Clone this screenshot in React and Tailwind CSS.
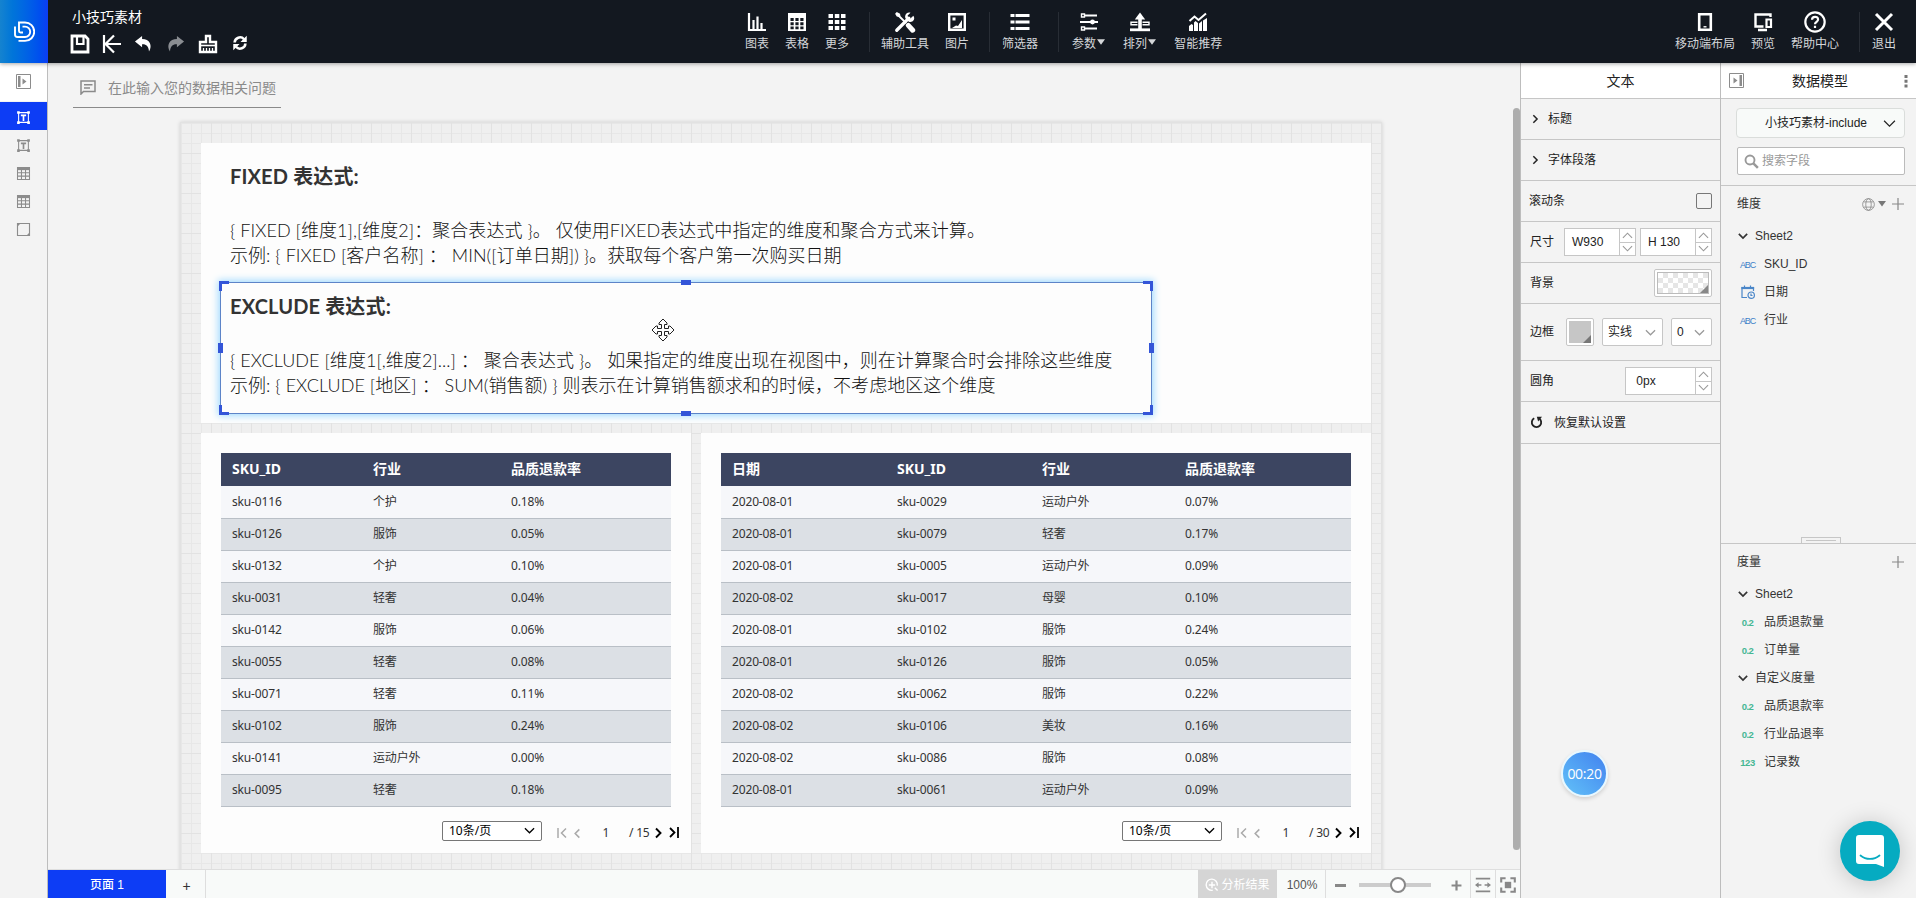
import React from 'react';
import { clsx } from 'clsx';

const leftRows = [
  ['sku-0116', '个护', '0.18%'],
  ['sku-0126', '服饰', '0.05%'],
  ['sku-0132', '个护', '0.10%'],
  ['sku-0031', '轻奢', '0.04%'],
  ['sku-0142', '服饰', '0.06%'],
  ['sku-0055', '轻奢', '0.08%'],
  ['sku-0071', '轻奢', '0.11%'],
  ['sku-0102', '服饰', '0.24%'],
  ['sku-0141', '运动户外', '0.00%'],
  ['sku-0095', '轻奢', '0.18%'],
];

const rightRows = [
  ['2020-08-01', 'sku-0029', '运动户外', '0.07%'],
  ['2020-08-01', 'sku-0079', '轻奢', '0.17%'],
  ['2020-08-01', 'sku-0005', '运动户外', '0.09%'],
  ['2020-08-02', 'sku-0017', '母婴', '0.10%'],
  ['2020-08-01', 'sku-0102', '服饰', '0.24%'],
  ['2020-08-01', 'sku-0126', '服饰', '0.05%'],
  ['2020-08-02', 'sku-0062', '服饰', '0.22%'],
  ['2020-08-02', 'sku-0106', '美妆', '0.16%'],
  ['2020-08-02', 'sku-0086', '服饰', '0.08%'],
  ['2020-08-01', 'sku-0061', '运动户外', '0.09%'],
];

const Svg = ({ size = 20, className, children }) => (
  <svg width={size} height={size} viewBox="0 0 20 20" fill="none" stroke="currentColor" strokeWidth="2" className={clsx('shrink-0', className)}>
    {children}
  </svg>
);

const icons = {
  save: (
    <>
      <path d="M2 2h13l3 3v13H2z" strokeWidth="2.8" />
      <path d="M7 2.500v7.500h6.500V2.500" strokeWidth="2.200" />
    </>
  ),
  back: <path d="M2 1v18M19 10H4M12 1.500L3.500 10l8.500 8.500" strokeWidth="2.200" />,
  undo: <path d="M8.500 2L1 8l7.500 6v-3.200c4.500-.2 6.800 1.800 7.300 7.600C19.800 12 16.500 5.200 8.500 5.200z" fill="currentColor" stroke="none" />,
  redo: <path d="M11.500 2L19 8l-7.500 6v-3.200C7 10.600 4.700 12.600 4.200 18.400.2 12 3.500 5.200 11.500 5.200z" fill="currentColor" stroke="none" />,
  brush: (
    <>
      <path d="M8 8V2h4v6h6v10H2V8z" strokeWidth="2.400" />
      <path d="M2 11.500h16" strokeWidth="1.600" />
      <path d="M5.500 14v4M8.500 14v4M11.500 14v4M14.500 14v4" strokeWidth="1.300" />
    </>
  ),
  refresh: (
    <>
      <path d="M4 9.500a6 6 0 0 1 10.500-3.700M16 10.500a6 6 0 0 1-10.500 3.700" strokeWidth="2.800" />
      <path d="M17.500 2v7h-7zM2.500 18v-7h7z" fill="currentColor" stroke="none" />
    </>
  ),
  chart: (
    <>
      <path d="M2 1v17h17" strokeWidth="2.200" />
      <path d="M6.500 8v9M10.500 4.500V17M14.500 11v6" strokeWidth="2.200" />
    </>
  ),
  grid: (
    <>
      <path d="M1 1h18v18H1z" fill="currentColor" stroke="none" />
      <path d="M3.500 6h3.200v3H3.500zM8.400 6h3.200v3H8.400zM13.300 6h3.200v3h-3.200zM3.500 10.300h3.200v3H3.500zM8.400 10.300h3.200v3H8.400zM13.300 10.300h3.200v3h-3.200zM3.500 14.600h3.200v2.600H3.500zM8.400 14.600h3.200v2.600H8.400zM13.300 14.600h3.200v2.600h-3.200z" fill="#131820" stroke="none" />
    </>
  ),
  more: <path d="M1.500 2h4.500v4H1.500zM7.800 2h4.500v4H7.800zM14 2h4.500v4H14zM1.500 8h4.500v4H1.500zM7.800 8h4.500v4H7.800zM14 8h4.500v4H14zM1.500 14h4.500v4H1.500zM7.800 14h4.500v4H7.800zM14 14h4.500v4H14z" fill="currentColor" stroke="none" />,
  tools: (
    <>
      <path d="M2.500 17.500L13.500 6.500" strokeWidth="3" strokeLinecap="round" />
      <path d="M17.600 4.300l-2.700 2.500-2-.6-.5-2L15 1.500C11.500.3 9.200 4 10.500 6.800l3 3c3.500 1 6.300-2.300 4.100-5.500z" fill="currentColor" stroke="none" />
      <path d="M2.500 2.500L11 11" strokeWidth="1.800" />
      <path d="M1 2.500L2.500 1l3 1.500.3 2L4.500 5.500l-2-.5z" fill="currentColor" stroke="none" />
      <path d="M13 13l4 4.500" strokeWidth="4.500" strokeLinecap="round" />
    </>
  ),
  image: (
    <>
      <path d="M2.200 2.200h15.600v15.600H2.200z" strokeWidth="2.400" />
      <path d="M5.500 5.500h3v3h-3zM5 16l4-2.500 2 .5 4-6v8z" fill="currentColor" stroke="none" />
    </>
  ),
  filter: <path d="M.5 3.500h4M5.500 3.500h14M.5 10h4M5.500 10h14M.5 16.500h4M5.500 16.500h14" strokeWidth="3.200" />,
  params: (
    <>
      <path d="M6 3.500h12M1 10h18M6 16.500h12" strokeWidth="2" />
      <path d="M2.500 2h3v3h-3zM2.500 15h3v3h-3z" strokeWidth="1.400" />
      <circle cx="13.500" cy="10" r="2.400" fill="currentColor" stroke="none" />
    </>
  ),
  align: (
    <>
      <path d="M10 17V5" strokeWidth="3.600" />
      <path d="M4.800 7.500L10 .5l5.200 7z" fill="currentColor" stroke="none" />
      <path d="M0 17.800h20" strokeWidth="2.800" />
      <path d="M7.500 10.200H1v2.500h6.500M12.500 10.200H19v2.500h-6.500" strokeWidth="1.400" />
    </>
  ),
  recommend: (
    <>
      <path d="M1.500 9l5-4.500 4 3.500 7.500-6.500" strokeWidth="2" />
      <path d="M1 19v-5l2.500-2 1.500 1V19zM6 19v-8.500l1.500-1.500L10 11v8zM11 19v-7.500l3-2.500v10zM15 19V8.500L19 6v13z" fill="currentColor" stroke="none" />
    </>
  ),
  mobile: (
    <>
      <path d="M4.200 2.200h11.600v15.600H4.200z" strokeWidth="2.600" />
      <path d="M8.500 14.800h3" strokeWidth="1.400" />
    </>
  ),
  preview: (
    <>
      <path d="M17.500 5V2.500h-15v12h8M5 18h9" strokeWidth="2.400" />
      <path d="M13.500 7.500h4.500v7.500h-4.500z" strokeWidth="2.200" />
    </>
  ),
  help: (
    <>
      <circle cx="10" cy="10" r="8.800" strokeWidth="2" />
      <path d="M7.300 8c0-3.700 5.500-3.500 5.500-.3 0 2-2.800 2.200-2.800 4.300M10 13.500v2" strokeWidth="2" />
    </>
  ),
  close: <path d="M2 2l16 16M18 2L2 18" strokeWidth="3" />,
  textBox: (
    <>
      <path d="M3.500 3.500h13v13h-13z" strokeWidth="1.400" />
      <path d="M1.500 1.500h3.500v3.500H1.500zM15 1.500h3.500v3.500H15zM1.500 15h3.500v3.500H1.500zM15 15h3.500v3.500H15z" fill="currentColor" stroke="none" />
      <path d="M6.500 7.200h7M10 7v7.500" strokeWidth="2.200" />
    </>
  ),
  table: (
    <>
      <path d="M2 2h16v16H2zM2 9h16M2 13.500h16M7.300 5v13M12.700 5v13" strokeWidth="1.400" />
      <path d="M2 2h16v3.500H2z" fill="currentColor" stroke="none" />
    </>
  ),
  box: (
    <>
      <path d="M2 2h16v16H2z" strokeWidth="1.500" />
      <path d="M2 6V2h4zM18 14v4h-4z" fill="currentColor" stroke="none" />
    </>
  ),
};

const Chevron = ({ dir = 'down', size = 12, width = 1.5, className }) => {
  const paths = { down: 'M1 3.500l5 5 5-5', up: 'M1 8.500l5-5 5 5', right: 'M4 1.500L8.500 6 4 10.500', left: 'M8 1.500L3.500 6 8 10.500' };
  return (
    <svg width={size} height={size} viewBox="0 0 12 12" fill="none" stroke="currentColor" strokeWidth={width} className={clsx('shrink-0', className)}>
      <path d={paths[dir]} />
    </svg>
  );
};

const ToolItem = ({ icon, label, size = 20, caret, className }) => (
  <div className={clsx('flex flex-col items-center text-white', className)}>
    <div className="flex h-5 items-center">
      <Svg size={size}>{icons[icon]}</Svg>
    </div>
    <div className="mt-1 flex text-xs leading-4 whitespace-nowrap text-[#d4d6d9]">
      {label}
      {caret && (
        <svg width="8" height="6" viewBox="0 0 9 6" className="mt-[3px] ml-px">
          <path d="M0 0h9L4.500 6z" fill="currentColor" />
        </svg>
      )}
    </div>
  </div>
);

const Separator = ({ className }) => <div className={clsx('h-10 w-px bg-[#282d35]', className)} />;

const Header = () => (
  <header className="relative z-10 flex h-[63px] shrink-0 bg-[#131820] shadow-[0_1px_4px_rgba(0,0,0,0.35)]">
    <div className="flex w-12 items-center justify-center bg-linear-to-r from-[#1583cf] to-[#0d3df5] text-white">
      <svg width="22" height="22" viewBox="0 0 22 22" fill="none" stroke="currentColor" strokeWidth="1.900">
        <path d="M10 11.500H7.500a1.500 1.500 0 0 1-1.500-1.500V1.500h6a9.200 9.200 0 0 1 0 18.400H5.500" />
        <path d="M2 5.500v8a2.500 2.500 0 0 0 2.500 2.500H12a5.200 5.200 0 0 0 0-10.400H9.500" />
      </svg>
    </div>
    <div className="w-[697px] pt-[6px] pl-6">
      <div className="text-sm leading-[22px] text-white">小技巧素材</div>
      <div className="mt-[6px] -ml-[2px] flex text-white">
        <Svg size={20} className="mr-3">{icons.save}</Svg>
        <Svg size={20} className="mr-3">{icons.back}</Svg>
        <Svg size={19} className="mr-[13px]">{icons.undo}</Svg>
        <Svg size={19} className="mr-[13px] text-[#8a8d92]">{icons.redo}</Svg>
        <Svg size={20} className="mr-[13px]">{icons.brush}</Svg>
        <Svg size={18}>{icons.refresh}</Svg>
      </div>
    </div>
    <div className="flex pt-3">
      <ToolItem icon="chart" label="图表" className="mr-4" />
      <ToolItem icon="grid" label="表格" className="mr-4" />
      <ToolItem icon="more" label="更多" />
      <Separator className="mr-[11px] ml-5" />
      <ToolItem icon="tools" label="辅助工具" size={22} className="mr-4" />
      <ToolItem icon="image" label="图片" />
      <Separator className="mr-3 ml-5" />
      <ToolItem icon="filter" label="筛选器" />
      <Separator className="mr-[13px] ml-5" />
      <ToolItem icon="params" label="参数" caret className="mr-[18px]" />
      <ToolItem icon="align" label="排列" caret className="mr-[18px]" />
      <ToolItem icon="recommend" label="智能推荐" />
    </div>
    <div className="ml-auto flex pt-3 pr-5">
      <ToolItem icon="mobile" label="移动端布局" className="mr-4" />
      <ToolItem icon="preview" label="预览" className="mr-4" />
      <ToolItem icon="help" label="帮助中心" size={22} />
      <Separator className="mr-3 ml-5" />
      <ToolItem icon="close" label="退出" />
    </div>
  </header>
);

const RailItem = ({ icon, active }) => (
  <div className={clsx('flex h-7 items-center justify-center pt-0.5', active ? 'bg-[#0d3df5] text-white' : 'text-[#8c8c8c]')}>
    <Svg size={15}>{icons[icon]}</Svg>
  </div>
);

const PanelToggle = () => (
  <svg width="15" height="15" viewBox="0 0 15 15" fill="none" stroke="#8c8c8c" className="shrink-0">
    <path d="M.5.5h14v14H.5z" />
    <path d="M2 2h2.500v11H2zM6.500 4.500v6l4-3z" fill="#8c8c8c" stroke="none" />
  </svg>
);

const Rail = () => (
  <aside className="w-12 shrink-0 border-r border-[#bdbdbd] bg-[#f3f3f3]">
    <div className="mb-px flex h-[38px] items-center justify-center bg-white pb-0.5">
      <PanelToggle />
    </div>
    <RailItem icon="textBox" active />
    <RailItem icon="textBox" />
    <RailItem icon="table" />
    <RailItem icon="table" />
    <RailItem icon="box" />
  </aside>
);

const DataTable = ({ headers, rows, cols }) => (
  <table className="w-full table-fixed border-collapse text-left">
    <colgroup>
      {cols.map((c, i) => (
        <col key={i} className={c} />
      ))}
    </colgroup>
    <thead>
      <tr className="h-[33px] bg-[#3c4561] text-sm text-white">
        {headers.map((h) => (
          <th key={h} className="p-0 pb-px pl-[11px] font-bold whitespace-nowrap">{h}</th>
        ))}
      </tr>
    </thead>
    <tbody>
      {rows.map((row, i) => (
        <tr key={i} className={clsx('h-8 border-b border-[#b9bfc6] text-xs text-[#333]', i % 2 ? 'bg-[#dce0e5]' : 'bg-[#f6f7fa]')}>
          {row.map((cell, j) => (
            <td key={j} className="p-0 pl-[11px] tracking-[-0.15px] whitespace-nowrap">{cell}</td>
          ))}
        </tr>
      ))}
    </tbody>
  </table>
);

const Pager = ({ total }) => (
  <div className="mt-[14px] -mr-2 flex h-5 items-center justify-end text-xs text-[#333]">
    <div className="flex h-5 w-[100px] items-center justify-between rounded-xs border border-[#767676] bg-white pr-[6px] pl-[6px] text-black">
      10条/页
      <Chevron size={11} width={1.4} />
    </div>
    <div className="ml-[15px] flex pt-[5px] text-[#aaa]">
      <svg width="10" height="10" viewBox="0 0 10 10" fill="none" stroke="currentColor" strokeWidth="1.500">
        <path d="M1 0v10M9 .5L4.500 5 9 9.500" />
      </svg>
      <Chevron dir="left" size={11} width={1.7} className="ml-[5px]" />
    </div>
    <span className="ml-[18px] w-[10px] pt-[4px] text-center">1</span>
    <span className="ml-[18px] w-[20px] pt-[4px] tracking-[-0.2px] whitespace-nowrap">/ {total}</span>
    <div className="flex pt-[5px] text-black">
      <Chevron dir="right" size={12} width={1.9} className="ml-[3px]" />
      <svg width="10" height="11" viewBox="0 0 10 11" fill="none" stroke="currentColor" strokeWidth="1.800" className="ml-[5px]">
        <path d="M9 0v11M1 1l4.500 4.500L1 10" />
      </svg>
    </div>
  </div>
);

const Selection = () => (
  <div className="pointer-events-none absolute -inset-px border border-[#5d84c8] shadow-[0_0_7px_2px_#a5dcff]">
    <i className="absolute -top-0.5 -left-0.5 size-2.5 border-t-3 border-l-3 border-[#3455d8]" />
    <i className="absolute -top-0.5 -right-0.5 size-2.5 border-t-3 border-r-3 border-[#3455d8]" />
    <i className="absolute -bottom-0.5 -left-0.5 size-2.5 border-b-3 border-l-3 border-[#3455d8]" />
    <i className="absolute -right-0.5 -bottom-0.5 size-2.5 border-r-3 border-b-3 border-[#3455d8]" />
    <i className="absolute -top-[3px] left-1/2 h-[5px] w-2.5 -translate-x-1/2 bg-[#3455d8]" />
    <i className="absolute -bottom-[3px] left-1/2 h-[5px] w-2.5 -translate-x-1/2 bg-[#3455d8]" />
    <i className="absolute top-1/2 -left-[3px] h-2.5 w-[5px] -translate-y-1/2 bg-[#3455d8]" />
    <i className="absolute top-1/2 -right-[3px] h-2.5 w-[5px] -translate-y-1/2 bg-[#3455d8]" />
    {/* move cursor */}
    <svg width="24" height="24" viewBox="0 0 24 24" className="absolute top-[35px] left-[430px]">
      <path d="M12 1l4 4v1.500h-2.500v4h4V8H19l4 4-4 4h-1.500v-2.500h-4v4H16V19l-4 4-4-4v-1.500h2.500v-4h-4V16H5l-4-4 4-4h1.500v2.500h4v-4H8V5z" fill="#fff" stroke="#222" strokeWidth="1" />
    </svg>
  </div>
);

const TextWidget = ({ title, lines, selected }) => (
  <div className="relative ml-5 h-[130px] w-[930px] pt-[9px] pl-[9px] text-[#333]">
    <h2 className="mb-7 font-[Lato,'Noto_Sans_CJK_SC',sans-serif] text-xl leading-7 font-bold tracking-[0.15px] whitespace-pre">{title}</h2>
    {lines.map((line) => (
      <p key={line} className="font-[Lato,'Noto_Sans_CJK_SC',sans-serif] text-lg leading-[25px] font-light tracking-[0.04px] whitespace-pre text-[#111]">{line}</p>
    ))}
    {selected && <Selection />}
  </div>
);

const Canvas = () => (
  <div className="ml-[132px] h-[760px] w-[1202px] shrink-0 border border-[#e2e2e2] bg-[#efefef] bg-[linear-gradient(to_right,#e2e2e2_1px,transparent_1px),linear-gradient(to_bottom,#e2e2e2_1px,transparent_1px),linear-gradient(to_right,#e7e7e7_1px,transparent_1px),linear-gradient(to_bottom,#e7e7e7_1px,transparent_1px)] bg-size-[40px_40px,40px_40px,10px_10px,10px_10px] bg-position-[30px_0,0_30px,0_0,0_0] py-5 pr-[10px] pl-5 font-['Noto_Sans','Noto_Sans_CJK_SC',sans-serif] shadow-[0_0_4px_rgba(0,0,0,0.15)]">
    <div className="h-[280px] bg-[#fdfdfd] pt-[10px]">
      <TextWidget
        title="FIXED 表达式:"
        lines={[
          '{ FIXED [维度1],[维度2]：聚合表达式 }。 仅使用FIXED表达式中指定的维度和聚合方式来计算。',
          '示例: { FIXED [客户名称] ： MIN([订单日期]) }。获取每个客户第一次购买日期',
        ]}
      />
      <TextWidget
        selected
        title="EXCLUDE 表达式:"
        lines={[
          '{ EXCLUDE [维度1[,维度2]...] ： 聚合表达式 }。 如果指定的维度出现在视图中，则在计算聚合时会排除这些维度',
          '示例: { EXCLUDE [地区] ： SUM(销售额) } 则表示在计算销售额求和的时候，不考虑地区这个维度',
        ]}
      />
    </div>
    <div className="mt-[10px] flex gap-[10px]">
      <div className="h-[420px] w-[490px] bg-[#fdfdfd] p-5">
        <DataTable headers={['SKU_ID', '行业', '品质退款率']} rows={leftRows} cols={['w-[141px]', 'w-[138px]', 'w-[171px]']} />
        <Pager total={15} />
      </div>
      <div className="h-[420px] w-[670px] bg-[#fdfdfd] p-5">
        <DataTable headers={['日期', 'SKU_ID', '行业', '品质退款率']} rows={rightRows} cols={['w-[165px]', 'w-[145px]', 'w-[143px]', 'w-[177px]']} />
        <Pager total={30} />
      </div>
    </div>
  </div>
);

const BottomBar = () => (
  <footer className="flex h-[29px] shrink-0 items-stretch border-t border-[#dedede] bg-[#f8faf9] text-xs text-[#555]">
    <div className="flex w-[118px] items-center justify-center bg-[#0d3df5] pt-0.5 font-medium text-white">页面 1</div>
    <div className="flex w-[40px] items-center justify-center border-r border-[#dedede] pt-1 pl-0.5 text-sm text-[#333]">+</div>
    <div className="ml-auto flex w-[79px] items-center justify-center gap-0.5 bg-[#d5d5d5] pt-0.5 text-white">
      <Svg size={14}>
        <path d="M17.500 11A8 8 0 1 0 11 17.500M10 5.500v9M5.500 10h9M14 14l4 4" />
      </Svg>
      分析结果
    </div>
    <div className="flex w-[49px] items-center justify-center border-r border-[#dedede] pt-0.5 pl-0.5">100%</div>
    <div className="flex w-[145px] items-center border-r border-[#dedede] pt-0.5 pl-[9px]">
      <div className="h-[3px] w-[11px] bg-[#888]" />
      <div className="relative ml-[13px] h-1 w-[72px] bg-[#ccc]">
        <div className="absolute -top-[6px] left-[31px] size-4 rounded-full border-2 border-[#888] bg-white" />
      </div>
      <Svg size={11} className="ml-[20px] text-[#888]">
        <path d="M10 1v18M1 10h18" strokeWidth="4" />
      </Svg>
    </div>
    <div className="flex w-[25px] items-center justify-center border-r border-[#dedede] pt-0.5 text-[#888]">
      <Svg size={16}>
        <path d="M1 2h18M1 18h18" strokeWidth="2.200" />
        <path d="M3 10h5M12 10h5" />
        <path d="M0 10l4.500-3.500v7zM20 10l-4.500-3.500v7z" fill="currentColor" stroke="none" />
      </Svg>
    </div>
    <div className="flex w-6 items-center justify-center pt-0.5 text-[#888]">
      <Svg size={16}>
        <path d="M1.500 7V1.500H7M13 1.500h5.500V7M18.500 13v5.500H13M7 18.500H1.500V13" strokeWidth="2.600" />
        <path d="M6 6h8v8H6z" fill="currentColor" stroke="none" />
      </Svg>
    </div>
  </footer>
);

const Stepper = ({ value, className }) => (
  <div className={clsx('flex h-7 border border-[#c6c6c6] bg-white', className)}>
    <div className="flex flex-1 items-center pl-[7px] whitespace-pre">{value}</div>
    <div className="flex w-4 flex-col border-l border-[#c6c6c6] text-[#999]">
      <div className="flex flex-1 items-center justify-center border-b border-[#c6c6c6]">
        <Chevron dir="up" size={11} width={1.2} />
      </div>
      <div className="flex flex-1 items-center justify-center">
        <Chevron size={11} width={1.2} />
      </div>
    </div>
  </div>
);

const PropRow = ({ children, className = 'h-[41px]' }) => (
  <div className={clsx('flex items-center border-b border-[#c6c6c6] pr-2 pl-[9px]', className)}>{children}</div>
);

const PropsPanel = () => (
  <aside className="w-[200px] shrink-0 border-l border-[#bdbdbd] bg-[#f3f3f3] text-xs text-[#222]">
    <div className="flex h-9 items-center justify-center border-b border-[#c6c6c6] bg-white text-sm">文本</div>
    <PropRow>
      <Chevron dir="right" width={1.8} size={10} className="mr-2" />
      标题
    </PropRow>
    <PropRow>
      <Chevron dir="right" width={1.8} size={10} className="mr-2" />
      字体段落
    </PropRow>
    <PropRow>
      <span className="-ml-px">滚动条</span>
      <div className="ml-auto size-4 rounded-xs border border-[#777]" />
    </PropRow>
    <PropRow>
      尺寸
      <Stepper value="W930" className="ml-auto w-[72px]" />
      <Stepper value="H 130" className="ml-1 w-[72px]" />
    </PropRow>
    <PropRow>
      背景
      <div className="ml-auto h-7 w-[58px] rounded-xs border border-[#c6c6c6] bg-white p-[2px]">
        <div className="flex h-full items-end justify-end border border-[#bbb] bg-[conic-gradient(#e6e6e6_25%,#fff_0_50%,#e6e6e6_0_75%,#fff_0)] bg-size-[10px_10px]">
          <svg width="8" height="8"><path d="M8 0v8H0z" fill="#888" /></svg>
        </div>
      </div>
    </PropRow>
    <PropRow className="h-[57px]">
      边框
      <div className="ml-3 size-7 rounded-xs border border-[#c6c6c6] bg-white p-[2px]">
        <div className="flex h-full items-end justify-end bg-[#c6c6c6]">
          <svg width="8" height="8"><path d="M8 0v8H0z" fill="#777" /></svg>
        </div>
      </div>
      <div className="ml-2 flex h-7 w-[61px] items-center justify-between rounded-xs border border-[#c6c6c6] bg-white pr-[6px] pl-[5px]">
        实线
        <Chevron size={11} width={1.3} className="text-[#999]" />
      </div>
      <div className="ml-2 flex h-7 w-[41px] items-center justify-between rounded-xs border border-[#c6c6c6] bg-white pr-[6px] pl-[5px]">
        0
        <Chevron size={11} width={1.3} className="text-[#999]" />
      </div>
    </PropRow>
    <PropRow>
      圆角
      <Stepper value=" 0px" className="ml-auto w-[87px]" />
    </PropRow>
    <PropRow className="h-[42px]">
      <Svg size={13} className="mr-[11px]">
        <path d="M6.500 3.500a7.200 7.200 0 1 0 7 0" strokeWidth="2.800" />
        <path d="M10.500 1h8L12.500 8.500z" fill="currentColor" stroke="none" />
      </Svg>
      恢复默认设置
    </PropRow>
  </aside>
);

const Field = ({ type, name }) => (
  <div className="flex h-7 items-center pl-[19px]">
    <div className="mr-[9px] flex w-[15px] justify-center">
      {type === 'date' ? (
        <svg width="14" height="14" viewBox="0 0 14 14" fill="none" stroke="#4a86c8" strokeWidth="1.200" className="shrink-0">
          <path d="M6 12.500H1V2.500h11.500V6M3.500.5v2M9.500.5v2" />
          <path d="M1 2.500h11.500v1H1z" fill="#4a86c8" />
          <circle cx="10.200" cy="10.200" r="3.200" />
          <path d="M10 8.500v2h1.500" />
        </svg>
      ) : (
        <span
          className={clsx(
            'pt-px leading-3',
            type === 'ABC' ? 'text-[9px] tracking-[-1.200px] text-[#3d7fc8]' : 'text-[9.500px] font-bold tracking-[-0.5px] text-[#45b793]'
          )}
        >
          {type}
        </span>
      )}
    </div>
    {name}
  </div>
);

const Group = ({ name }) => (
  <div className="flex h-7 items-center pl-[17px]">
    <Chevron size={10} width={2} className="mr-[7px]" />
    {name}
  </div>
);

const DataPanel = () => (
  <aside className="flex w-[196px] shrink-0 flex-col border-l border-[#bdbdbd] bg-[#f3f3f3] text-xs text-[#333]">
    <div className="flex h-9 shrink-0 items-center border-b border-[#c6c6c6] bg-white pr-[8px] pl-2 text-sm text-[#222]">
      <svg width="15" height="15" viewBox="0 0 15 15" fill="none" stroke="#8c8c8c" className="shrink-0">
        <path d="M.5.5h14v14H.5z" />
        <path d="M10.500 2H13v11h-2.500zM4.500 4.500v6l4-3z" fill="#8c8c8c" stroke="none" />
      </svg>
      <span className="ml-[48px]">数据模型</span>
      <svg width="4" height="14" viewBox="0 0 4 14" fill="#777" className="ml-auto">
        <path d="M.5 1h3v3h-3zM.5 5.700h3v3h-3zM.5 10.500h3v3h-3z" />
      </svg>
    </div>
    <div className="border-b border-[#c6c6c6] pt-[9px] pr-[11px] pb-[10px] pl-[15px]">
      <div className="flex h-[30px] items-center rounded-sm border border-[#dadddb] bg-[#f8faf9] pr-2 pl-7 text-[#222]">
        小技巧素材-include
        <Chevron size={13} width={1.1} className="ml-auto" />
      </div>
      <div className="mt-[9px] ml-px flex h-7 items-center rounded-xs border border-[#bbb] bg-white pl-[6px] text-[#999]">
        <Svg size={15} className="mr-[3px]">
          <circle cx="8" cy="8" r="6" strokeWidth="2.500" />
          <path d="M12.500 12.500l6 6" strokeWidth="3.400" />
        </Svg>
        搜索字段
      </div>
    </div>
    <div className="h-[357px]">
      <div className="flex h-9 items-center pr-3 pl-4">
        维度
        <Svg size={13} className="ml-auto text-[#888]">
          <circle cx="10" cy="10" r="9" strokeWidth="1.300" />
          <ellipse cx="10" cy="10" rx="4.200" ry="9" strokeWidth="1.300" />
          <path d="M2.500 6h15M2.500 14h15" strokeWidth="1.200" />
        </Svg>
        <svg width="8" height="6" viewBox="0 0 8 6" className="mr-[6px] ml-[3px]">
          <path d="M0 0h8L4 5.500z" fill="#777" />
        </svg>
        <Svg size={12} className="text-[#888]">
          <path d="M10 0v20M0 10h20" strokeWidth="2" />
        </Svg>
      </div>
      <Group name="Sheet2" />
      <Field type="ABC" name="SKU_ID" />
      <Field type="date" name="日期" />
      <Field type="ABC" name="行业" />
    </div>
    <div className="relative flex-1 border-t border-[#c6c6c6]">
      <div className="absolute -top-[7px] left-20 h-[6px] w-10 border border-b-0 border-[#c6c6c6] px-1 pt-[2px]">
        <div className="h-px bg-[#c6c6c6]" />
      </div>
      <div className="flex h-9 items-center pr-3 pl-4">
        度量
        <Svg size={12} className="ml-auto text-[#888]">
          <path d="M10 0v20M0 10h20" strokeWidth="2" />
        </Svg>
      </div>
      <Group name="Sheet2" />
      <Field type="0.2" name="品质退款量" />
      <Field type="0.2" name="订单量" />
      <Group name="自定义度量" />
      <Field type="0.2" name="品质退款率" />
      <Field type="0.2" name="行业品退率" />
      <Field type="123" name="记录数" />
    </div>
  </aside>
);

const App = () => (
  <div className="relative flex h-[898px] w-[1916px] flex-col overflow-hidden bg-[#f3f3f3] font-['Liberation_Sans','Noto_Sans_CJK_SC',sans-serif]">
    <Header />
    <div className="flex min-h-0 flex-1">
      <Rail />
      <main className="flex min-w-0 flex-1 flex-col">
        <div className="flex min-h-0 flex-1">
          <div className="flex min-w-0 flex-1 flex-col overflow-hidden">
            <div className="mb-[14px] ml-[25px] flex h-[45px] w-[208px] shrink-0 items-center border-b border-[#8a8a8a] pt-[5px] pl-[7px] text-sm text-[#8a8a8a]">
              <svg width="16" height="15" viewBox="0 0 16 15" fill="none" stroke="currentColor" strokeWidth="1.500" className="mr-3">
                <path d="M1 14V1h14v10.500H3.500z" />
                <path d="M4 4.800h8.500M4 8h6" />
              </svg>
              在此输入您的数据相关问题
            </div>
            <Canvas />
          </div>
          <div className="w-[7px] pt-[45px]">
            <div className="h-[742px] rounded-full bg-[#adadad]" />
          </div>
        </div>
        <BottomBar />
      </main>
      <PropsPanel />
      <DataPanel />
    </div>

    {/* floating recorder timer */}
    <div className="absolute top-[750px] left-[1561px] flex size-[47px] items-center justify-center rounded-full border-[2.500px] border-[#e8f8ff] bg-linear-to-tr from-[#63c1f8] to-[#4381ee] font-['Open_Sans',sans-serif] text-sm tracking-[-0.3px] text-white shadow-[0_2px_4px_rgba(0,0,0,0.15)]">
      00:20
    </div>

    <div className="absolute top-[821px] left-[1840px] flex size-[60px] items-center justify-center rounded-full bg-[#06abc1] shadow-[0_2px_24px_rgba(0,0,0,0.2)]">
      <svg width="28" height="32" viewBox="0 0 28 32">
        <path d="M3 0h22a3 3 0 0 1 3 3v29l-8-3H3a3 3 0 0 1-3-3V3a3 3 0 0 1 3-3z" fill="#fff" />
        <path d="M4.500 20.500c5.500 4.600 13.500 4.600 19 0" fill="none" stroke="#06abc1" strokeWidth="1.800" strokeLinecap="round" />
      </svg>
    </div>
  </div>
);

export default App;
